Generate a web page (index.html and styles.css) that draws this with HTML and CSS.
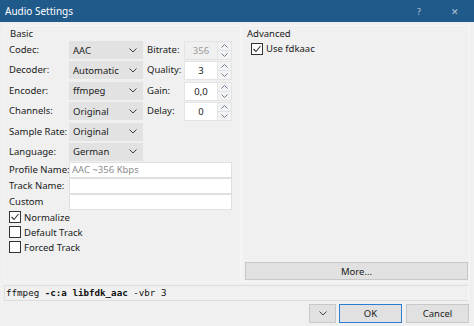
FILE: index.html
```html
<!DOCTYPE html>
<html>
<head>
<meta charset="utf-8">
<title>Audio Settings</title>
<link rel="stylesheet" href="styles.css">
</head>
<body>
<div class="dialog">
  <!-- window caption -->
  <div class="titlebar">
    <span class="title">Audio Settings</span>
    <span class="caption-btn help">?</span>
    <span class="caption-btn close">✕</span>
  </div>

  <div class="panels">
    <section class="panel basic">
      <div class="panel-title">Basic</div>
      <div class="form-grid">
        <span class="lbl">Codec:</span>
        <div class="combo">AAC<svg class="chev" width="8" height="5" viewBox="0 0 8 5"><path d="M0.5 0.5 L4 4 L7.5 0.5"/></svg></div>
        <span class="lbl lbl2">Bitrate:</span>
        <div class="spin disabled"><span class="spin-val">356</span><span class="spin-btns"><svg width="7" height="4" viewBox="0 0 7 4"><path d="M0.5 3.5 L3.5 0.5 L6.5 3.5"/></svg><svg width="7" height="4" viewBox="0 0 7 4"><path d="M0.5 0.5 L3.5 3.5 L6.5 0.5"/></svg></span></div>

        <span class="lbl">Decoder:</span>
        <div class="combo">Automatic<svg class="chev" width="8" height="5" viewBox="0 0 8 5"><path d="M0.5 0.5 L4 4 L7.5 0.5"/></svg></div>
        <span class="lbl lbl2">Quality:</span>
        <div class="spin"><span class="spin-val">3</span><span class="spin-btns"><svg width="7" height="4" viewBox="0 0 7 4"><path d="M0.5 3.5 L3.5 0.5 L6.5 3.5"/></svg><svg width="7" height="4" viewBox="0 0 7 4"><path d="M0.5 0.5 L3.5 3.5 L6.5 0.5"/></svg></span></div>

        <span class="lbl">Encoder:</span>
        <div class="combo">ffmpeg<svg class="chev" width="8" height="5" viewBox="0 0 8 5"><path d="M0.5 0.5 L4 4 L7.5 0.5"/></svg></div>
        <span class="lbl lbl2">Gain:</span>
        <div class="spin"><span class="spin-val">0,0</span><span class="spin-btns"><svg width="7" height="4" viewBox="0 0 7 4"><path d="M0.5 3.5 L3.5 0.5 L6.5 3.5"/></svg><svg width="7" height="4" viewBox="0 0 7 4"><path d="M0.5 0.5 L3.5 3.5 L6.5 0.5"/></svg></span></div>

        <span class="lbl">Channels:</span>
        <div class="combo">Original<svg class="chev" width="8" height="5" viewBox="0 0 8 5"><path d="M0.5 0.5 L4 4 L7.5 0.5"/></svg></div>
        <span class="lbl lbl2">Delay:</span>
        <div class="spin"><span class="spin-val">0</span><span class="spin-btns"><svg width="7" height="4" viewBox="0 0 7 4"><path d="M0.5 3.5 L3.5 0.5 L6.5 3.5"/></svg><svg width="7" height="4" viewBox="0 0 7 4"><path d="M0.5 0.5 L3.5 3.5 L6.5 0.5"/></svg></span></div>

        <span class="lbl">Sample Rate:</span>
        <div class="combo">Original<svg class="chev" width="8" height="5" viewBox="0 0 8 5"><path d="M0.5 0.5 L4 4 L7.5 0.5"/></svg></div>
        <span class="empty"></span>
        <span class="empty"></span>

        <span class="lbl">Language:</span>
        <div class="combo">German<svg class="chev" width="8" height="5" viewBox="0 0 8 5"><path d="M0.5 0.5 L4 4 L7.5 0.5"/></svg></div>
        <span class="empty"></span>
        <span class="empty"></span>

        <span class="lbl">Profile Name:</span>
        <div class="field placeholder">AAC ~356 Kbps</div>

        <span class="lbl">Track Name:</span>
        <div class="field"></div>

        <span class="lbl">Custom</span>
        <div class="field"></div>
      </div>

      <div class="checks">
        <label class="check"><span class="box checked"><svg width="10" height="10" viewBox="0 0 10 10"><path d="M1.5 5 L4 7.5 L8.5 2"/></svg></span>Normalize</label>
        <label class="check"><span class="box"></span>Default Track</label>
        <label class="check"><span class="box"></span>Forced Track</label>
      </div>
    </section>

    <section class="panel advanced">
      <div class="panel-title">Advanced</div>
      <label class="check adv-check"><span class="box checked"><svg width="10" height="10" viewBox="0 0 10 10"><path d="M1.5 5 L4 7.5 L8.5 2"/></svg></span>Use fdkaac</label>
      <div class="spacer"></div>
      <button class="btn more">More...</button>
    </section>
  </div>

  <div class="command">ffmpeg <b>-c:a libfdk_aac</b> -vbr 3</div>

  <div class="actions">
    <button class="btn drop"><svg class="chev" width="8" height="5" viewBox="0 0 8 5"><path d="M0.5 0.5 L4 4 L7.5 0.5"/></svg></button>
    <button class="btn ok">OK</button>
    <button class="btn cancel">Cancel</button>
  </div>
</div>
</body>
</html>
```

FILE: styles.css
```css
/* whole window */
body {
  margin: 0;
  background: #f0f0f0;
  font-family: "Noto Sans", sans-serif;
  font-size: 9.5px;
  color: #1a1a1a;
}

.dialog {
  width: 474px;
  height: 326px;
  display: flex;
  flex-direction: column;
}

/* caption bar */
.titlebar {
  height: 22px;
  background: #1f5a8b;
  color: #fff;
  display: flex;
  align-items: center;
  padding-left: 5px;
  font-size: 10px;
}

.title {
  flex: 1;
}

.caption-btn {
  color: #b9c9da;
  font-size: 9px;
  text-align: center;
}

.help {
  width: 10px;
  margin-right: 24px;
}

.close {
  width: 14px;
  margin-right: 12px;
}

/* the two group panels */
.panels {
  display: flex;
  margin: 3px 4px 0 4px;
  height: 257px;
  gap: 1px;
}

.panel {
  display: flex;
  flex-direction: column;
  border: 1px solid #f6f6f6;
}

.basic {
  width: 231px;
  padding-left: 4px;
}

.advanced {
  flex: 1;
  padding: 0 1px 1px 2px;
}

.panel-title {
  height: 15px;
  line-height: 15px;
  padding-left: 1px;
}

.advanced .panel-title {
  padding-left: 2px;
}

.form-grid {
  display: grid;
  grid-template-columns: 60px 74px 41px 48px;
  grid-template-rows: repeat(5, 20.4px) 19px repeat(3, 16px);
  align-items: start;
}

.lbl {
  height: 18px;
  line-height: 18px;
  white-space: nowrap;
}

.lbl2 {
  padding-left: 4px;
}

.form-grid .field + .lbl,
.form-grid .lbl:nth-last-child(-n+6) {
  height: 15px;
  line-height: 15px;
}

.combo {
  height: 18px;
  background: #e2e2e2;
  display: flex;
  align-items: center;
  justify-content: space-between;
  padding: 0 6px 0 4px;
}

.chev {
  fill: none;
  stroke: #404040;
  stroke-width: 1;
}

/* numeric up/down boxes */
.spin {
  height: 17px;
  display: flex;
  background: #fff;
  border: 1px solid #e4e4e4;
}

.spin-val {
  flex: 1;
  text-align: center;
  line-height: 17px;
}

.spin.disabled {
  background: #f0f0f0;
  color: #9a9a9a;
}

.spin-btns {
  width: 13px;
  display: flex;
  flex-direction: column;
  border-left: 1px solid #e4e4e4;
  background: #f3f3f3;
}

.spin-btns svg {
  flex: 1;
  width: 13px;
  padding: 0 3px;
  box-sizing: border-box;
  fill: none;
  stroke: #6b7f99;
  stroke-width: 1;
}

.spin-btns svg + svg {
  border-top: 1px solid #dfe4ea;
}

.field {
  grid-column: 2 / 5;
  height: 14px;
  background: #fff;
  border: 1px solid #e0e0e0;
  padding-left: 2px;
  line-height: 14px;
}

.placeholder {
  color: #8c8c8c;
}

/* check boxes */
.checks {
  display: flex;
  flex-direction: column;
}

.check {
  height: 15px;
  display: flex;
  align-items: center;
  gap: 3px;
}

.box {
  width: 10px;
  height: 10px;
  border: 1px solid #333;
  background: #fff;
  display: flex;
}

.box svg {
  fill: none;
  stroke: #333;
  stroke-width: 1.1;
}

.adv-check {
  margin-left: 6px;
  margin-top: 0;
}

.spacer {
  flex: 1;
}

.btn {
  font-family: inherit;
  font-size: inherit;
  color: #1a1a1a;
  background: #e1e1e1;
  border: 1px solid #c8c8c8;
  padding: 0;
}

.more {
  height: 18px;
}

/* command preview line */
.command {
  margin: 3px 5px 0 4px;
  height: 14px;
  line-height: 14px;
  border: 1px solid #dedede;
  border-right-color: #f8f8f8;
  padding-left: 1px;
  font-family: "DejaVu Sans Mono", monospace;
  font-size: 9.2px;
  color: #111;
}

.actions {
  display: flex;
  justify-content: flex-end;
  gap: 3px;
  margin: 3px 5px 0 0;
}

.actions .btn {
  height: 19px;
}

.drop {
  width: 27px;
  display: flex;
  align-items: center;
  justify-content: center;
}

.ok {
  width: 63px;
  border-color: #2c7fd0;
}

.cancel {
  width: 63px;
  margin-left: 1px;
}
```
